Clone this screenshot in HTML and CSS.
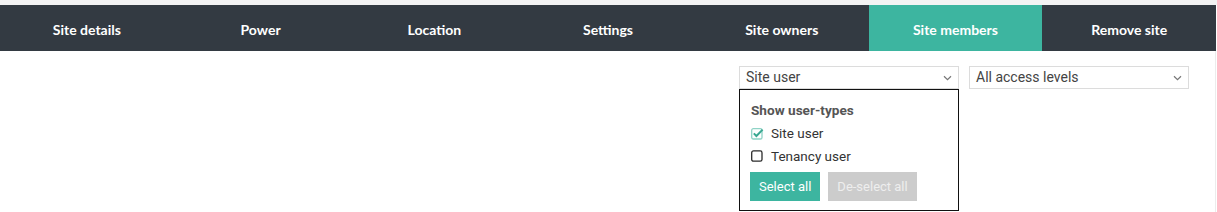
FILE: index.html
```html
<!DOCTYPE html>
<html lang="en">
<head>
<meta charset="utf-8">
<title>Site members</title>
<link rel="stylesheet" href="styles.css">
</head>
<body>
<div class="topstrip"></div>
<nav class="tabs">
  <a class="tab">Site details</a>
  <a class="tab">Power</a>
  <a class="tab">Location</a>
  <a class="tab">Settings</a>
  <a class="tab">Site owners</a>
  <a class="tab active">Site members</a>
  <a class="tab">Remove site</a>
</nav>
<main class="content">
  <div class="filters">
    <div class="dropdown">
      <div class="select">
        <span>Site user</span>
        <svg class="chev" width="9" height="6" viewBox="0 0 9 6"><path d="M1 1.2 L4.5 4.6 L8 1.2" fill="none" stroke="#777" stroke-width="1.2"/></svg>
      </div>
      <div class="popup">
        <div class="popup-title">Show user-types</div>
        <div class="opt">
          <svg class="box" width="14" height="13" viewBox="0 0 14 13"><rect x="0.7" y="1.7" width="10.3" height="10.3" rx="1.6" fill="none" stroke="#8fd3c6" stroke-width="1.3"/><path d="M2.8 6.4 L5.4 9 L11.6 2.6" fill="none" stroke="#3aa892" stroke-width="2"/></svg>
          <span>Site user</span>
        </div>
        <div class="opt">
          <svg class="box" width="14" height="13" viewBox="0 0 14 13"><rect x="0.7" y="0.9" width="10.3" height="10.3" rx="1.8" fill="none" stroke="#2b2b2b" stroke-width="1.3"/></svg>
          <span>Tenancy user</span>
        </div>
        <div class="btns">
          <button class="btn btn-primary">Select all</button>
          <button class="btn btn-disabled">De-select all</button>
        </div>
      </div>
    </div>
    <div class="dropdown">
      <div class="select">
        <span>All access levels</span>
        <svg class="chev" width="9" height="6" viewBox="0 0 9 6"><path d="M1 1.2 L4.5 4.6 L8 1.2" fill="none" stroke="#777" stroke-width="1.2"/></svg>
      </div>
    </div>
  </div>
</main>
</body>
</html>
```
FILE: styles.css
```css
html, body {
  margin: 0;
  padding: 0;
  background: #fff;
}
body {
  width: 1217px;
  height: 212px;
  overflow: hidden;
  font-family: Roboto, "Liberation Sans", sans-serif;
}
.topstrip {
  height: 5px;
  background: #f3f3f3;
}
.tabs {
  display: flex;
  width: 1216px;
  height: 46px;
  background: #333a42;
}
.tab {
  flex: 1 1 0;
  box-sizing: border-box;
  padding-top: 4px;
  line-height: 42px;
  text-align: center;
  color: #fff;
  font-family: Lato, "Open Sans", sans-serif;
  font-weight: 700;
  font-size: 14px;
  cursor: pointer;
}
.tab.active {
  background: #3db5a0;
}
.content {
  box-sizing: border-box;
  width: 1216px;
  height: 161px;
  border-right: 1px solid #ececec;
  padding: 15px 26px 0 0;
}
.filters {
  display: flex;
  justify-content: flex-end;
  gap: 10px;
}
.dropdown {
  position: relative;
  width: 220px;
}
.select {
  box-sizing: border-box;
  height: 23px;
  border: 1px solid #dcdcdc;
  display: flex;
  align-items: center;
  justify-content: space-between;
  padding: 0 6px 0 6px;
  font-size: 14px;
  color: #444;
  line-height: 21px;
}
.chev {
  display: block;
  margin-top: 1px;
}
.popup {
  position: absolute;
  top: 23px;
  left: 0;
  box-sizing: border-box;
  width: 220px;
  background: #fff;
  border: 1px solid #111;
  padding: 12px 10px 9px 11px;
}
.popup-title {
  font-size: 13.6px;
  font-weight: 700;
  color: #555;
  line-height: 17px;
  margin-bottom: 3px;
}
.opt {
  display: flex;
  align-items: center;
  line-height: 23px;
  font-size: 13.5px;
  color: #333;
}
.box {
  display: block;
  margin-right: 6px;
}
.btns {
  display: flex;
  gap: 8px;
  margin-top: 4px;
  margin-left: -1px;
}
.btn {
  height: 29px;
  border: none;
  padding: 0 9px;
  font-family: Roboto, "Liberation Sans", sans-serif;
  font-size: 13px;
  cursor: pointer;
}
.btn-primary {
  background: #3db5a0;
  color: #fff;
}
.btn-disabled {
  background: #cccccc;
  color: #eeeeee;
}
```
